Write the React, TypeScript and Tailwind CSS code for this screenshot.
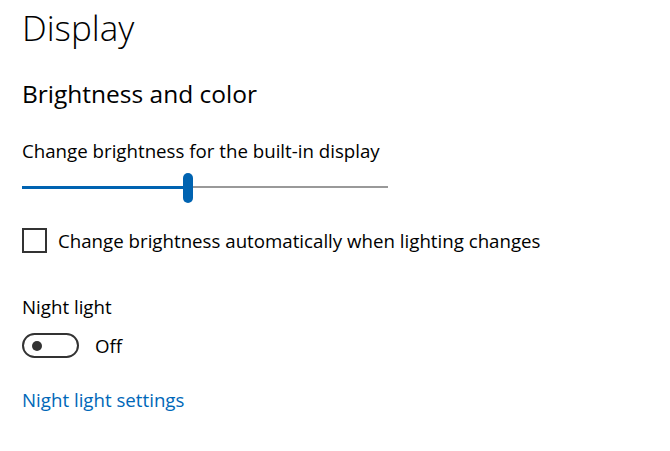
export default function App() {
  return (
    <div className="min-h-screen bg-white text-black font-['Open_Sans',sans-serif] pl-[22px]">
      <h1 className="pt-[2px] text-[35px] font-light leading-[52px]">Display</h1>

      <h2 className="mt-[24px] text-[24.5px] leading-[32px]">Brightness and color</h2>

      <div className="mt-[29px] text-[18.7px] leading-[24px]">Change brightness for the built-in display</div>

      {/* slider */}
      <div className="relative mt-[10px] h-[30px] w-[366px]">
        <div className="absolute left-0 top-[13px] h-[3px] w-[165px] bg-[#0063b1]" />
        <div className="absolute left-[165px] right-0 top-[13px] h-[2px] bg-[#999999]" />
        <div className="absolute left-[161px] top-0 h-[30px] w-[10px] rounded-full bg-[#0063b1]" />
      </div>

      <div className="mt-[25px] flex items-center gap-[11px]">
        <div className="h-[25px] w-[25px] border-2 border-[#333333]" />
        <span className="text-[18.7px] leading-[24px]">Change brightness automatically when lighting changes</span>
      </div>

      <div className="mt-[42px] text-[18.7px] leading-[24px]">Night light</div>

      <div className="mt-[14px] flex items-center gap-[16px]">
        <div className="flex h-[25px] w-[57px] items-center rounded-full border-2 border-[#333333] pl-[8px]">
          <div className="h-[10px] w-[10px] rounded-full bg-[#333333]" />
        </div>
        <span className="text-[18.7px] leading-[24px]">Off</span>
      </div>

      <div className="mt-[30px] text-[18.7px] leading-[24px] text-[#0067b8]">Night light settings</div>
    </div>
  );
}
